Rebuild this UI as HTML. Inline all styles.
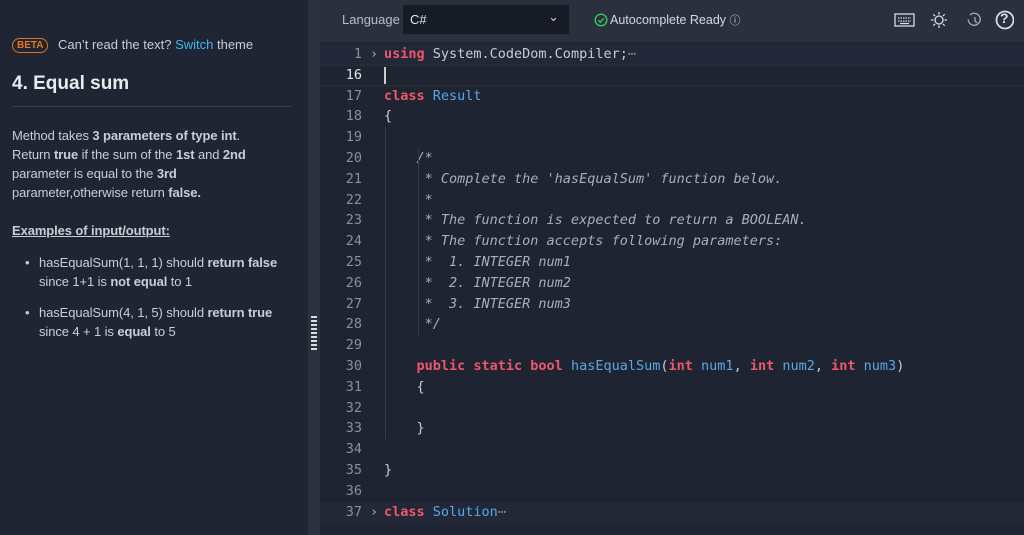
<!DOCTYPE html>
<html><head><meta charset="utf-8"><style>
*{margin:0;padding:0;box-sizing:border-box}
body{width:1024px;height:535px;overflow:hidden;background:#1f2532;font-family:"Liberation Sans",sans-serif;position:relative}
#left{position:absolute;left:0;top:0;width:308px;height:535px;background:#1f2532;color:#c9ced6}
#div{position:absolute;left:308px;top:0;width:12px;height:535px;background:#2b313e}
#top{position:absolute;left:320px;top:0;width:704px;height:42px;background:#2a303d}
#ed{position:absolute;left:320px;top:42px;width:704px;height:493px;background:#1e2431}
.beta{position:absolute;left:12px;top:38px;border:1.5px solid #e0761f;color:#e0761f;border-radius:9px;font-size:10px;font-weight:bold;padding:1px 4px;line-height:11px}
.ln{position:absolute;left:0;width:42px;text-align:right;color:#8a909b}
.code{position:absolute;font-family:"DejaVu Sans Mono","Liberation Mono",monospace;font-size:13.5px;white-space:pre;color:#c8ccd4}
.row{position:absolute;left:0;height:21px;line-height:21px;width:704px}
.k{color:#f0566b;font-weight:bold}.b{color:#5aa7e8}.c{color:#a9aeb8;font-style:italic}
.t{position:absolute;left:64px}
p{font-size:13px;line-height:19px;letter-spacing:-0.1px}
</style></head><body>
<div id="left">
<span class="beta">BETA</span>
<div style="position:absolute;left:58px;top:37px;font-size:13px">Can’t read the text? <span style="color:#3fb7e6">Switch</span> theme</div>
<div style="position:absolute;left:12px;top:73px;font-size:19px;font-weight:bold;color:#e8ebf0">4. Equal sum</div>
<div style="position:absolute;left:12px;top:106px;width:279px;height:1px;background:#3a404c"></div>
<p style="position:absolute;left:12px;top:126px;width:295px">Method takes <b>3 parameters of type int</b>.<br>Return <b>true</b> if the sum of the <b>1st</b> and <b>2nd</b><br>parameter is equal to the <b>3rd</b><br>parameter,otherwise return <b>false.</b></p>
<p style="position:absolute;left:12px;top:221px"><b><u>Examples of input/output:</u></b></p>
<p style="position:absolute;left:25px;top:253px">•</p>
<p style="position:absolute;left:39px;top:253px;width:265px">hasEqualSum(1, 1, 1) should <b>return false</b><br>since 1+1 is <b>not equal</b> to 1</p>
<p style="position:absolute;left:25px;top:303px">•</p>
<p style="position:absolute;left:39px;top:303px;width:265px">hasEqualSum(4, 1, 5) should <b>return true</b><br>since 4 + 1 is <b>equal</b> to 5</p>
</div>
<div id="div"><div style="position:absolute;left:3px;top:316px;width:6px;height:34px;background:repeating-linear-gradient(#ddd 0 2px,transparent 2px 4px)"></div></div>
<div id="top">
<div style="position:absolute;left:22px;top:12px;font-size:13px;color:#b9bec7">Language</div>
<div style="position:absolute;left:83px;top:5px;width:166px;height:29px;background:#161b26;color:#e5e8ee;font-size:13px;padding:7px 7px">C#<span style="position:absolute;right:10px;top:4px;color:#ccc">⌄</span></div>
<svg style="position:absolute;left:274px;top:13px" width="14" height="14" fill="none" stroke="#3cc55a" stroke-width="1.4"><circle cx="7" cy="7" r="5.8"/><path d="M4.3 7.2l2 2 3.5-4"/></svg>
<div style="position:absolute;left:290px;top:12px;font-size:12.5px;color:#d4d8df">Autocomplete Ready <span style="font-size:11px">ⓘ</span></div>
<svg style="position:absolute;left:574px;top:10px" width="120" height="22" fill="none" stroke="#d8dce3" stroke-width="1.3">
<rect x="1" y="4" width="19" height="12"/><path d="M4 8h13M4 11h13" stroke-dasharray="1.5 1"/><path d="M6 13.5h9"/>
<circle cx="45" cy="10" r="4"/><path d="M45 2v2.5M45 15.5v2.5M37 10h2.5M50.5 10H53M39.3 4.3l1.8 1.8M48.9 13.9l1.8 1.8M39.3 15.7l1.8-1.8M48.9 6.1l1.8-1.8"/>
<path d="M76 5a6 6 0 1 1-1.8 4.5" stroke="#aab"/><path d="M81 7v4l2 2" stroke="#aab"/>
<circle cx="111" cy="10" r="8.5" stroke-width="1.8"/></svg>
<div style="position:absolute;left:680px;top:10px;font-size:14px;font-weight:bold;color:#e0e3e8">?</div>
</div>
<div id="ed"><div class="code" style="left:0;top:0;width:704px;height:493px">
<div class="row" style="top:2px;background:#222837"><span class="ln">1</span><span style="position:absolute;left:50px;color:#aaa">›</span><span class="t"><span class="k">using</span> System.CodeDom.Compiler;<span style="color:#888">⋯</span></span></div>
<div class="row" style="top:22.8px;border-top:1px solid #2e2e2e;border-bottom:1px solid #2e2e2e;line-height:19px"><span class="ln" style="color:#e0e3e8">16</span><span style="position:absolute;left:64px;top:1px;width:1.5px;height:17px;background:#ccc"></span></div>
<div class="row" style="top:43.6px"><span class="ln">17</span><span class="t"><span class="k">class</span> <span class="b">Result</span></span></div>
<div class="row" style="top:64.4px"><span class="ln">18</span><span class="t">{</span></div>
<div class="row" style="top:85.2px"><span class="ln">19</span></div>
<div class="row" style="top:106px"><span class="ln">20</span><span class="t c">    /*</span></div>
<div class="row" style="top:126.8px"><span class="ln">21</span><span class="t c">     * Complete the 'hasEqualSum' function below.</span></div>
<div class="row" style="top:147.6px"><span class="ln">22</span><span class="t c">     *</span></div>
<div class="row" style="top:168.4px"><span class="ln">23</span><span class="t c">     * The function is expected to return a BOOLEAN.</span></div>
<div class="row" style="top:189.2px"><span class="ln">24</span><span class="t c">     * The function accepts following parameters:</span></div>
<div class="row" style="top:210px"><span class="ln">25</span><span class="t c">     *  1. INTEGER num1</span></div>
<div class="row" style="top:230.8px"><span class="ln">26</span><span class="t c">     *  2. INTEGER num2</span></div>
<div class="row" style="top:251.6px"><span class="ln">27</span><span class="t c">     *  3. INTEGER num3</span></div>
<div class="row" style="top:272.4px"><span class="ln">28</span><span class="t c">     */</span></div>
<div class="row" style="top:293.2px"><span class="ln">29</span></div>
<div class="row" style="top:314px"><span class="ln">30</span><span class="t">    <span class="k">public static bool</span> <span class="b">hasEqualSum</span>(<span class="k">int</span> <span class="b">num1</span>, <span class="k">int</span> <span class="b">num2</span>, <span class="k">int</span> <span class="b">num3</span>)</span></div>
<div class="row" style="top:334.8px"><span class="ln">31</span><span class="t">    {</span></div>
<div class="row" style="top:355.6px"><span class="ln">32</span></div>
<div class="row" style="top:376.4px"><span class="ln">33</span><span class="t">    }</span></div>
<div class="row" style="top:397.2px"><span class="ln">34</span></div>
<div class="row" style="top:418px"><span class="ln">35</span><span class="t">}</span></div>
<div class="row" style="top:438.8px"><span class="ln">36</span></div>
<div class="row" style="top:459.6px;background:#222837"><span class="ln">37</span><span style="position:absolute;left:50px;color:#aaa">›</span><span class="t"><span class="k">class</span> <span class="b">Solution</span><span style="color:#888">⋯</span></span></div>
<div style="position:absolute;left:65px;top:85px;width:1px;height:312px;background:#343a47"></div>
<div style="position:absolute;left:98px;top:106px;width:1px;height:187px;background:#343a47"></div>
</div></div>
</body></html>
